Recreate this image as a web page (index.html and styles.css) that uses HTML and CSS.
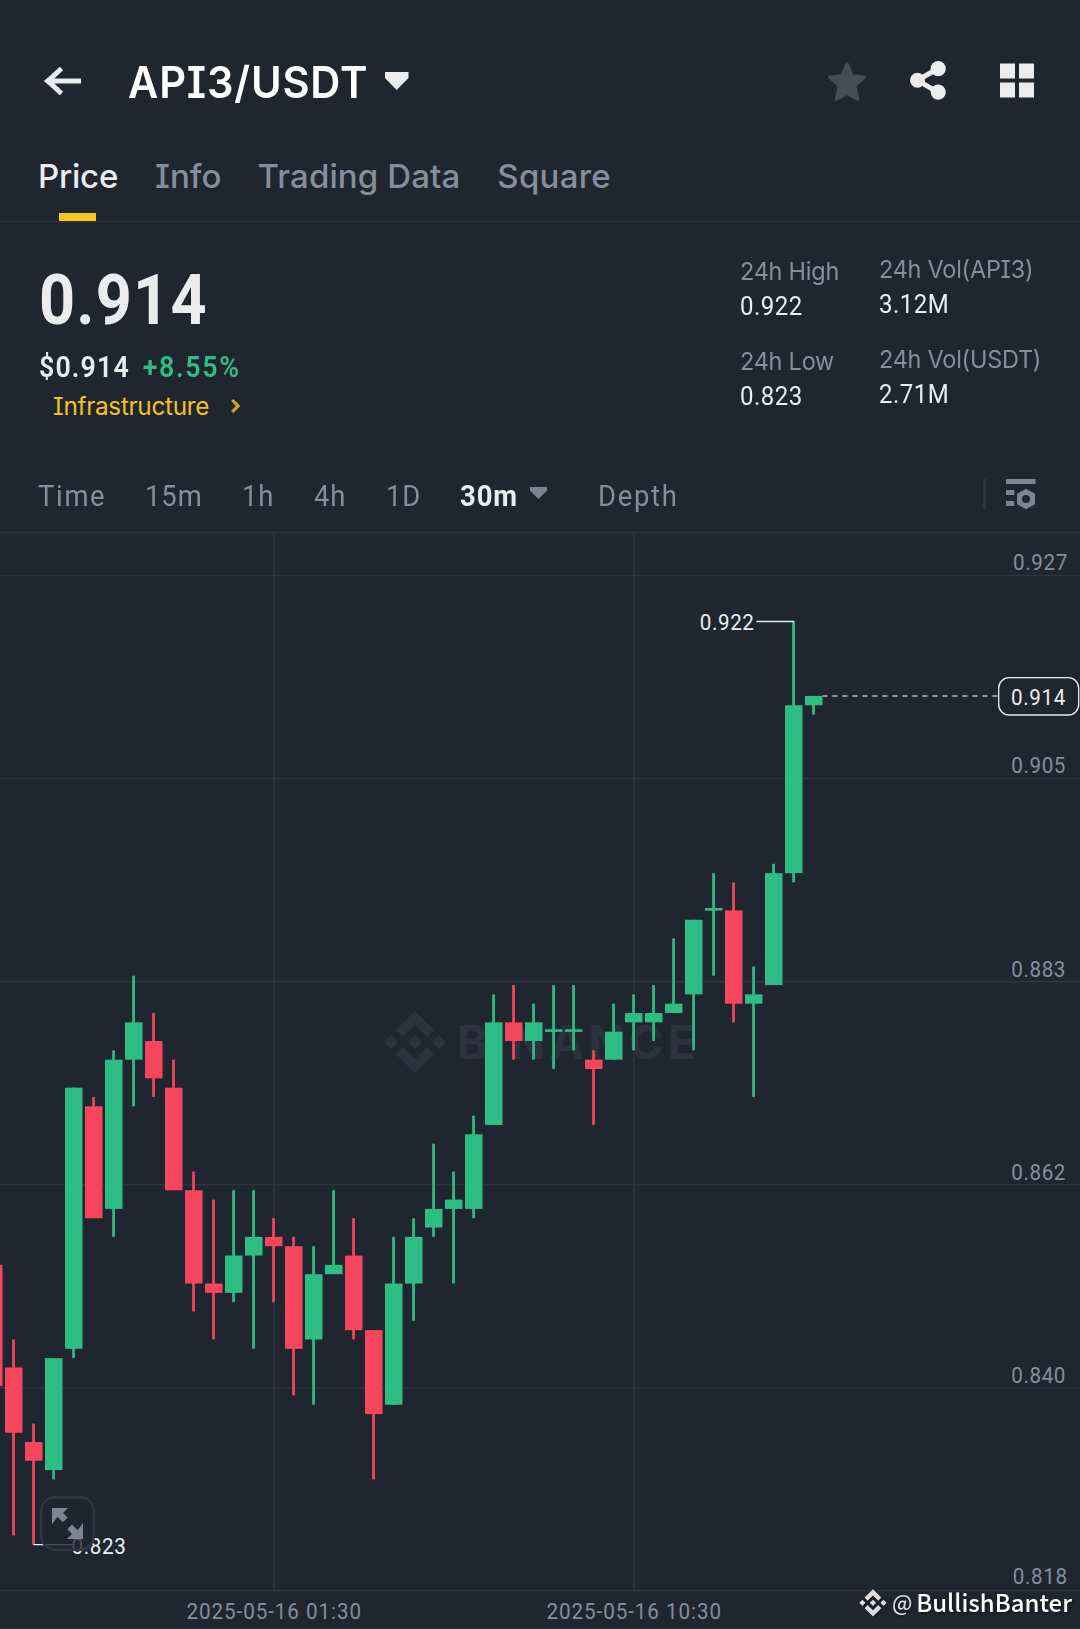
FILE: index.html
```html
<!DOCTYPE html>
<html lang="en">
<head>
<meta charset="utf-8">
<title>API3/USDT</title>
<link rel="stylesheet" href="styles.css">
</head>
<body>
<header class="header">
  <svg class="back" width="37" height="28" viewBox="0 0 37 28"><path d="M37 14H4M17.500 1.500L4 14l13.500 12.500" fill="none" stroke="#eaecef" stroke-width="5"/><path d="M0 14l4-3.500 6 3.500-6 3.500z" fill="#eaecef"/></svg>
  <h1 class="pair">API3/USDT</h1>
  <svg class="caret" width="24" height="18" viewBox="0 0 24 18"><path d="M0 0h23.500v6L11.700 18 0 6z" fill="#eaecef"/></svg>
  <div class="actions">
    <svg class="star" width="38" height="39" viewBox="0 0 38 39"><path d="M19 2l4.800 12L36 15.300l-9.500 8.700L29.500 37 19 31.200 8.500 37l3-13L2 15.300 14.200 14z" fill="#474d57" stroke="#474d57" stroke-width="3.500" stroke-linejoin="round"/></svg>
    <svg class="share" width="36" height="39" viewBox="0 0 36 39"><path d="M28.100 7.500L7.500 19.300l20.600 12" fill="none" stroke="#eaecef" stroke-width="5"/><g fill="#eaecef"><circle cx="7.500" cy="19.300" r="7.500"/><circle cx="28.200" cy="7.700" r="7.600"/><circle cx="28.200" cy="31.100" r="7.600"/></g></svg>
    <svg class="grid" width="34" height="35" viewBox="0 0 34 35"><path d="M0 .500h15v15H0zM19 .500h15v15H19zM0 19.500h15v15H0zM19 19.500h15v15H19z" fill="#eaecef"/></svg>
  </div>
</header>

<nav class="tabs">
  <div class="tab active">Price</div>
  <div class="tab info">Info</div>
  <div class="tab trading">Trading Data</div>
  <div class="tab square">Square</div>
</nav>

<section class="summary">
  <div class="quote">
    <div class="last">0.914</div>
    <div class="change"><span class="usd">$0.914</span><span class="pct">+8.55%</span></div>
    <div class="tag"><span>Infrastructure</span><svg width="10" height="14" viewBox="0 0 10 14"><path d="M1.200 1L7 7l-5.800 6" fill="none" stroke="#d8a413" stroke-width="3.200"/></svg></div>
  </div>
  <div class="stats first">
    <div class="label">24h High</div><div class="value">0.922</div>
    <div class="label">24h Low</div><div class="value">0.823</div>
  </div>
  <div class="stats">
    <div class="label">24h Vol(API3)</div><div class="value">3.12M</div>
    <div class="label">24h Vol(USDT)</div><div class="value">2.71M</div>
  </div>
</section>

<nav class="intervals">
  <span class="wide">Time</span><span>15m</span><span>1h</span><span>4h</span><span>1D</span><span class="selected">30m</span>
  <svg width="17" height="12" viewBox="0 0 17 12"><path d="M0 0h17v3.500L8.500 12 0 3.500z" fill="#7b8492"/></svg>
  <span class="wide">Depth</span>
  <i class="divider"></i>
  <svg class="settings" width="30" height="30" viewBox="0 0 30 30"><path d="M0 0h29.500v5H0zM0 11h8.300v5H0zM0 22h8.300v5H0z" fill="#7b8492"/><path d="M20 9.800l9 5v10.400l-9 5-9-5V14.800zM20 16a4 4 0 1 0 0 8 4 4 0 0 0 0-8z" fill="#7b8492" fill-rule="evenodd"/></svg>
</nav>

<main class="chart">
  <svg id="plot" width="1080" height="1095" viewBox="0 534 1080 1095">
    <defs>
      <path id="logo" d="M38.730 53.200l24.590-24.580 24.600 24.600 14.300-14.310L63.320 0 24.420 38.900zM0 63.310l14.300-14.310 14.310 14.310-14.310 14.300zM38.730 73.410l24.590 24.590 24.600-24.600 14.310 14.290-38.910 38.910-38.910-38.880zM98 63.310l14.300-14.310 14.310 14.300-14.310 14.320zM77.830 63.300L63.320 48.780 48.800 63.300l14.520 14.520z"/>
    </defs>
    <path class="gridline" d="M0 575.500H1080M0 778.500H1080M0 981.600H1080M0 1184.700H1080M0 1387.700H1080M0 1590.800H1080M273.900 534V1591M633.900 534V1591M0 1628.500H1080"/>
    <g fill="#2d333e">
      <use href="#logo" transform="translate(384 1011) scale(.491)"/>
      <text class="brand" x="457" y="1059">BINANCE</text>
    </g>
    <g id="candles"></g>
    <path d="M756.300 621.500h37.900M33.500 1544.700h39" stroke="#eaecef" stroke-width="1.300"/>
    <path d="M822.400 696H998" stroke="#b9bcc1" stroke-width="1.500" stroke-dasharray="5 5"/>
    <g class="axis">
      <text transform="translate(1013 570) scale(.93 1)">0.927</text>
      <text transform="translate(1011.200 773) scale(.93 1)">0.905</text>
      <text transform="translate(1011.200 977) scale(.93 1)">0.883</text>
      <text transform="translate(1011.200 1180) scale(.93 1)">0.862</text>
      <text transform="translate(1011.200 1383) scale(.93 1)">0.840</text>
      <text transform="translate(1012.800 1584) scale(.93 1)">0.818</text>
      <text class="date" transform="translate(186.400 1619) scale(.93 1)">2025-05-16 01:30</text>
      <text class="date" transform="translate(546.400 1619) scale(.93 1)">2025-05-16 10:30</text>
    </g>
    <rect x="998.700" y="677.700" width="80" height="37.300" rx="10.500" fill="#1f2630" stroke="#eaecef" stroke-width="1.300"/>
    <g class="axis bright">
      <text transform="translate(699.700 630) scale(.93 1)">0.922</text>
      <text transform="translate(1011 705) scale(.93 1)">0.914</text>
      <text transform="translate(71.500 1554) scale(.93 1)">0.823</text>
    </g>
    <rect x="41.200" y="1497.200" width="52.600" height="52.600" rx="14" fill="#1f2630" fill-opacity=".8" stroke="#303641" stroke-width="2.400"/>
    <path d="M52 1508h16l-5 5 4.600 4.600-4.700 4.700-5.400-5.300L52 1524zM83 1539H67l5-5-4.700-4.700 4.700-4.700 5.600 5.600L83 1523z" fill="#7b8492"/>
    <g class="author">
      <use href="#logo" fill="#dcdcdc" transform="translate(859.300 1589.200) scale(.216)"/>
      <text class="at" x="892" y="1610.500" fill="#dcdcdc">@</text>
      <text x="916.200" y="1611.500" fill="#fff">BullishBanter</text>
    </g>
  </svg>
</main>
<script src="chart.js"></script>
</body>
</html>
```
FILE: styles.css
```css
* { box-sizing: border-box; }
body {
  margin: 0;
  width: 1080px;
  height: 1629px;
  overflow: hidden;
  background: #1f2630;
  color: #eaecef;
  font-family: Inter, "Liberation Sans", sans-serif;
  font-feature-settings: "cv08";
}
svg { display: block; flex: none; }
span { white-space: nowrap; }

.header {
  display: flex;
  align-items: center;
  height: 117px;
  padding: 47px 46px 0 44px;
}
.back { margin-top: -2px; }
.pair {
  margin: 1px 0 0 47px;
  width: 257px;
  font-size: 43.800px;
  line-height: 44px;
  font-weight: 600;
  letter-spacing: .900px;
  color: #fff;
  transform: scaleX(.95);
  transform-origin: left;
}
.caret { margin-top: -2px; }
.actions { display: flex; align-items: center; margin-left: auto; }
.star { margin-top: -1px; }
.share { margin-left: 44px; margin-top: -3px; }
.grid { margin-left: 54px; margin-top: -3px; }

.tabs {
  display: flex;
  height: 105px;
  padding: 39px 0 0 38px;
  border-bottom: 1px solid #2d333e;
  font-size: 33px;
  line-height: 40px;
  font-weight: 500;
  color: #848e9c;
}
.tab { white-space: nowrap; }
.active { width: 117px; color: #eaecef; letter-spacing: -.200px; }
.active::after {
  content: "";
  display: block;
  width: 37px;
  height: 8px;
  margin: 17px 0 0 21px;
  background: #f8c520;
}
.info { width: 102.600px; letter-spacing: 0; }
.trading { width: 239.700px; letter-spacing: .100px; }
.square { letter-spacing: .310px; }

.summary { display: flex; height: 239px; padding-left: 39px; }
.quote { padding-top: 38px; width: 701px; }
.last {
  font: 700 70px/80px Roboto, sans-serif;
  letter-spacing: 1.300px;
  transform: scaleX(.9);
  transform-origin: left;
}
.change {
  display: flex;
  margin-top: 9px;
  font: 600 28.800px/36px Roboto, sans-serif;
  transform: scaleX(.93);
  transform-origin: left;
}
.usd { width: 111.500px; letter-spacing: 1.200px; }
.pct { color: #2ebd85; letter-spacing: 1.800px; }
.tag {
  display: flex;
  align-items: center;
  margin: 6px 0 0 14px;
  font-size: 24.300px;
  line-height: 30px;
  color: #f5c21b;
  letter-spacing: -.300px;
}
.tag span { width: 178px; }
.stats {
  padding-top: 33px;
  transform: scaleX(.95);
  transform-origin: left;
}
.first { width: 139px; padding-top: 35px; }
.label {
  font-size: 24.700px;
  line-height: 28px;
  letter-spacing: -.250px;
  color: #848e9c;
  white-space: nowrap;
}
.value {
  margin: 8px 0 26px;
  font: 400 25.300px/28px Roboto, sans-serif;
  letter-spacing: .500px;
}

.intervals {
  display: grid;
  grid-template-columns: 107px 97.300px 71.700px 72px 74.500px 69.300px 67.800px 385px 23px 30px;
  align-items: center;
  height: 73px;
  padding-left: 38px;
  border-bottom: 3px solid #282e39;
  font: 400 29.500px/36px Roboto, sans-serif;
  letter-spacing: 1px;
  color: #848e9c;
}
.intervals span { transform: scaleX(.93); transform-origin: left; }
.intervals svg { margin-top: -6px; }
.wide { letter-spacing: 1.800px; }
.selected { font-weight: 700; color: #eaecef; }
.divider { width: 3px; height: 30px; margin-top: -4px; background: #303641; }
.intervals .settings { margin-top: -4px; }

.gridline { stroke: #2e3440; stroke-width: 1.600; fill: none; }
.up { fill: #2ebd85; }
.down { fill: #f6465d; }
.brand { font: 700 46.800px Inter, sans-serif; letter-spacing: 4.200px; font-feature-settings: normal; }
.axis { font: 400 22.200px Roboto, sans-serif; letter-spacing: .650px; fill: #848e9c; }
.date { letter-spacing: 1px; }
.bright { fill: #eaecef; }
.author {
  font: 500 24px "Noto Sans CJK SC", sans-serif;
  filter: drop-shadow(1px 1px 1px rgba(0, 0, 0, .5));
}
.at { font-size: 21px; }
```
FILE: chart.js
```js
// Each candle: [open, high, low, close] in thousandths of a USDT, 30 minutes apart.
const candles = [
  [853, 853, 840, 840], [842, 845, 824, 835], [834, 836, 823, 832], [831, 843, 830, 843],
  [844, 872, 843, 872], [870, 871, 858, 858], [859, 876, 856, 875], [875, 884, 870, 879],
  [877, 880, 871, 873], [872, 875, 861, 861], [861, 863, 848, 851], [851, 860, 845, 850],
  [850, 861, 849, 854], [854, 861, 844, 856], [856, 858, 849, 855], [855, 856, 839, 844],
  [845, 855, 838, 852], [852, 861, 852, 853], [854, 858, 845, 846], [846, 846, 830, 837],
  [838, 856, 838, 851], [851, 858, 847, 856], [857, 866, 856, 859], [859, 863, 851, 860],
  [859, 869, 858, 867], [868, 882, 868, 879], [879, 883, 875, 877], [877, 881, 875, 879],
  [878, 883, 874, 878], [878, 883, 876, 878], [875, 876, 868, 874], [875, 881, 875, 878],
  [879, 882, 876, 880], [879, 883, 877, 880], [880, 888, 880, 881], [882, 890, 876, 890],
  [891, 895, 884, 891], [891, 894, 879, 881], [881, 885, 871, 882], [883, 896, 883, 895],
  [895, 922, 894, 913], [913, 914, 912, 914]
];
const NS = 'http://www.w3.org/2000/svg';
const layer = document.getElementById('candles');
const yOf = p => 621.3 + (922 - p) * 9.327;
const bar = (x, y, w, h, cls) => {
  const r = document.createElementNS(NS, 'rect');
  Object.entries({ x, y, width: w, height: h, class: cls }).forEach(([k, v]) => r.setAttribute(k, v));
  layer.appendChild(r);
};
candles.forEach(([open, high, low, close], i) => {
  const cls = close >= open ? 'up' : 'down';
  const cx = -6.5 + i * 20;
  const top = yOf(Math.max(open, close));
  const body = Math.abs(close - open) * 9.327;
  bar(cx - 1.3, yOf(high), 2.7, yOf(low) - yOf(high), cls);
  bar(cx - 8.5, body ? top : top - 2.4, 17.5, body || 2.6, cls);
});
```
